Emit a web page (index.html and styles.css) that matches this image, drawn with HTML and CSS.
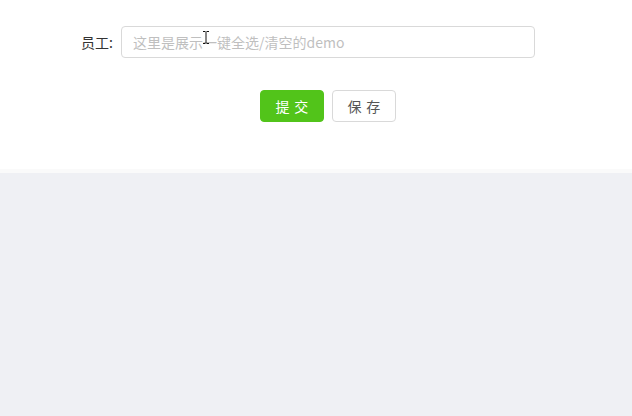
FILE: index.html
```html
<!DOCTYPE html>
<html lang="zh-CN">
<head>
<meta charset="utf-8">
<link rel="stylesheet" href="styles.css">
</head>
<body>
<div class="panel">
  <form class="form">
    <div class="row">
      <label class="label">员工:</label>
      <div class="control">
        <input class="input" type="text" placeholder="这里是展示一键全选/清空的demo">
        <svg class="cursor" width="8" height="13" viewBox="0 0 8 13"><path d="M1 0.5h2.5M4.5 0.5h2.5M4 1v11M1 12.5h2.5M4.5 12.5h2.5" stroke="#111" stroke-width="1" fill="none"/></svg>
      </div>
    </div>
    <div class="actions">
      <button type="button" class="btn btn-primary">提交</button>
      <button type="button" class="btn">保存</button>
    </div>
  </form>
</div>
</body>
</html>
```

FILE: styles.css
```css
html, body {
  margin: 0;
  padding: 0;
  background: #eff0f4;
  font-family: "Microsoft YaHei", "Noto Sans CJK SC", sans-serif;
  font-size: 14px;
  color: #333;
}
.panel {
  background: #fff;
  height: 173px;
  padding-top: 26px;
  box-sizing: border-box;
  border-bottom: 4px solid #fafafa;
}
.form {
  margin: 0;
}
.row {
  display: flex;
  align-items: center;
  height: 32px;
}
.label {
  width: 113px;
  text-align: right;
  margin-right: 8px;
  color: #333;
  line-height: 32px;
}
.control {
  position: relative;
  width: 414px;
}
.input {
  display: block;
  box-sizing: border-box;
  width: 414px;
  height: 32px;
  border: 1px solid #d9d9d9;
  border-radius: 4px;
  padding: 0 11px;
  font: inherit;
  font-size: 14px;
  color: #333;
  outline: none;
  background: #fff;
}
.input::placeholder {
  color: #bfbfbf;
}
.cursor {
  position: absolute;
  left: 81px;
  top: 5px;
}
.actions {
  display: flex;
  justify-content: center;
  gap: 8px;
  margin-left: 121px;
  width: 414px;
  margin-top: 32px;
}
.btn {
  box-sizing: border-box;
  height: 32px;
  width: 64px;
  padding: 0;
  border: 1px solid #d9d9d9;
  border-radius: 4px;
  background: #fff;
  color: #555;
  font: inherit;
  font-size: 14px;
  letter-spacing: 0.34em;
  text-indent: 0.34em;
  cursor: pointer;
}
.btn-primary {
  background: #52c41a;
  border-color: #52c41a;
  color: #fff;
}
```
